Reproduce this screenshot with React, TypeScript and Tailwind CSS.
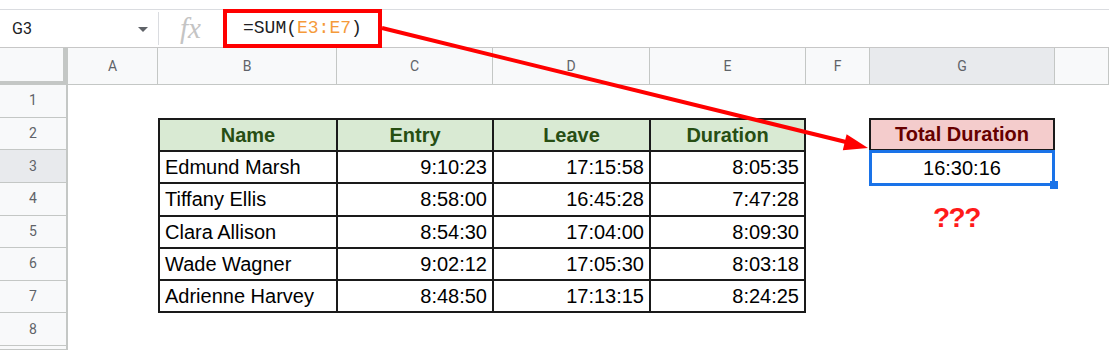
import React from "react";

const rows = [
  ["Edmund Marsh", "9:10:23", "17:15:58", "8:05:35"],
  ["Tiffany Ellis", "8:58:00", "16:45:28", "7:47:28"],
  ["Clara Allison", "8:54:30", "17:04:00", "8:09:30"],
  ["Wade Wagner", "9:02:12", "17:05:30", "8:03:18"],
  ["Adrienne Harvey", "8:48:50", "17:13:15", "8:24:25"],
];

const cols = ["A", "B", "C", "D", "E", "F", "G", ""];

export default function App() {
  return (
    <div className="relative w-[1109px] h-[350px] overflow-hidden bg-white font-['Liberation_Sans',Arial,sans-serif] text-black">
      {/* top strip */}
      <div className="h-[10px] border-b border-[#dadce0]" />
      {/* formula bar */}
      <div className="flex h-[38px] border-b border-[#c7c7c7]">
        <div className="flex w-[158px] items-center justify-between pl-[12px] pr-[10px] font-['Roboto',sans-serif] text-[16px] text-[#202124]">
          <span>G3</span>
          <span className="mt-[2px] h-0 w-0 border-l-[5px] border-r-[5px] border-t-[5px] border-l-transparent border-r-transparent border-t-[#5f6368]" />
        </div>
        <div className="my-[2px] w-px bg-[#dadce0]" />
        <div className="flex w-[64px] items-center pl-[21px] font-['Liberation_Serif',serif] text-[29px] italic text-[#c4c4c4]">
          fx
        </div>
        <div className="-mt-[1px] flex h-[39px] w-[159px] items-center border-[4px] border-[#ff0000] pl-[16px] font-['Liberation_Mono',monospace] text-[18px] text-[#202124]">
          <span>=SUM(</span>
          <span className="text-[#f59a3a]">E3:E7</span>
          <span>)</span>
        </div>
      </div>

      {/* grid */}
      <div className="grid grid-cols-[68px_90px_179px_156px_157px_156px_64px_185px_1fr] grid-rows-[37px_repeat(8,32.625px)_1fr] h-[302px]">
        {/* header row */}
        <div className="border-b-[4px] border-r-[5px] border-[#c4c7c5] bg-[#f8f9fa]" />
        {cols.map((c, i) => (
          <div
            key={i}
            className={`flex items-center justify-center border-b border-r border-[#c4c7c5] font-['Roboto',sans-serif] text-[14px] text-[#5f6368] ${
              c === "G" ? "bg-[#e8eaed]" : "bg-[#f8f9fa]"
            }`}
          >
            {c}
          </div>
        ))}

        {/* row headers */}
        {[1, 2, 3, 4, 5, 6, 7, 8, 9].map((n) => (
          <div
            key={n}
            style={{ gridRow: n + 1, gridColumn: 1 }}
            className={`flex items-center justify-center border-b border-r-[2px] border-[#c4c7c5] font-['Roboto',sans-serif] text-[14px] text-[#5f6368] ${
              n === 3 ? "bg-[#e8eaed]" : "bg-[#f8f9fa]"
            }`}
          >
            {n < 9 ? n : ""}
          </div>
        ))}

        {/* data table */}
        <div className="col-start-3 col-end-7 row-start-3 row-end-9 grid grid-cols-[178px_156px_157px_1fr] grid-rows-[repeat(6,1fr)] border-l-2 border-t-2 border-[#1a1a1a] text-[20px]">
          {["Name", "Entry", "Leave", "Duration"].map((h) => (
            <div
              key={h}
              className="flex items-center justify-center border-b-2 border-r-2 border-[#1a1a1a] bg-[#d9ead3] font-bold text-[#274e13]"
            >
              {h}
            </div>
          ))}
          {rows.map((r, ri) =>
            r.map((v, ci) => (
              <div
                key={`${ri}-${ci}`}
                className={`flex items-center border-b-2 border-r-2 border-[#1a1a1a] ${
                  ci === 0 ? "justify-start pl-[5px]" : "justify-end pr-[5px]"
                }`}
              >
                {v}
              </div>
            ))
          )}
        </div>

        {/* total duration */}
        <div className="col-start-8 row-start-3 row-end-5 -ml-[1px] flex flex-col text-[20px]">
          <div className="flex h-[33px] items-center justify-center border-2 border-[#1a1a1a] bg-[#f4cccc] font-bold text-[#660000]">
            Total Duration
          </div>
          <div className="relative -mt-[1px] flex flex-1 items-center justify-center border-[3px] border-[#1a73e8]">
            16:30:16
            <span className="absolute -bottom-[6px] -right-[6px] h-[8px] w-[8px] bg-[#1a73e8]" />
          </div>
        </div>
      </div>

      {/* ??? annotation */}
      <div className="absolute left-[933px] top-[197px] font-['Liberation_Sans',Arial,sans-serif] text-[28px] font-bold tracking-[-1.5px] text-[#ff1a1a]">
        ???
      </div>

      {/* red arrow */}
      <svg className="pointer-events-none absolute inset-0" width="1109" height="350">
        <line x1="382" y1="28" x2="846" y2="142" stroke="#ff0000" strokeWidth="4" />
        <polygon points="868,148 846.6,134.3 842.8,150.2" fill="#ff0000" />
      </svg>
    </div>
  );
}
